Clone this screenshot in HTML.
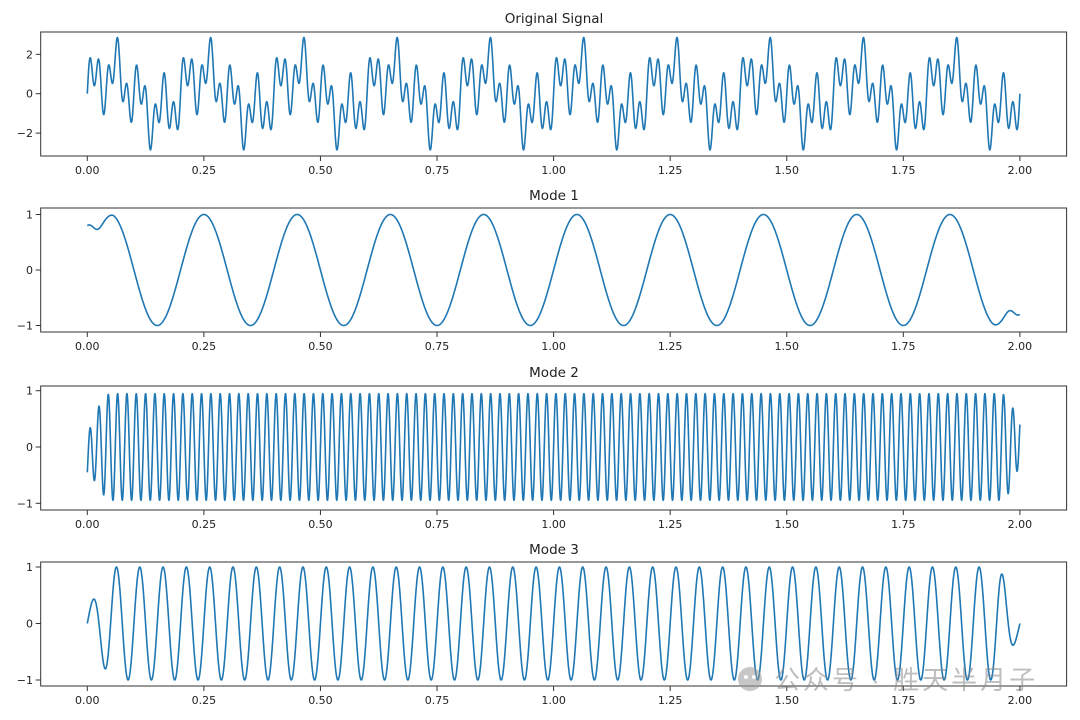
<!DOCTYPE html>
<html><head><meta charset="utf-8"><style>
html,body{margin:0;padding:0;background:#fff;width:1080px;height:720px;overflow:hidden}
svg text{font-family:"DejaVu Sans","Liberation Sans",sans-serif;fill:#222}
</style></head><body>
<svg id="s" width="1080" height="720" viewBox="0 0 1080 720" xmlns="http://www.w3.org/2000/svg">
<text x="554" y="23" font-size="13.5" text-anchor="middle">Original Signal</text>
<text x="554" y="200" font-size="13.5" text-anchor="middle">Mode 1</text>
<text x="554" y="377" font-size="13.5" text-anchor="middle">Mode 2</text>
<text x="554" y="554" font-size="13.5" text-anchor="middle">Mode 3</text>
<g id="g"></g>
<g opacity="0.55">
<circle cx="750" cy="679" r="12" fill="#9a9a9a"/>
<circle cx="746" cy="677" r="2" fill="#fff"/><circle cx="754" cy="677" r="2" fill="#fff"/>
<text x="774" y="689" font-size="26" letter-spacing="3" style="font-family:'Liberation Sans','Noto Sans CJK SC',sans-serif;fill:#8a8a8a">公众号 · 胜天半月子</text>
</g>
</svg>
<script>
var NS="http://www.w3.org/2000/svg",g=document.getElementById('g');
function X(t){return 87.3+t*466.3;}
function ss(a,b,x){var u=Math.min(1,Math.max(0,(x-a)/(b-a)));return u*u*(3-2*u);}
var P=Math.PI;
var panels=[
 {top:32,y0:93.7,sc:19.7,ticks:[-2,0,2],f:function(t){return Math.sin(10*P*t)+Math.sin(40*P*t)+Math.sin(100*P*t);}},
 {top:208,y0:270,sc:55.5,ticks:[-1,0,1],f:function(t){var w=ss(0,0.06,t),e=ss(1.94,2,t);return (1-e)*(w*Math.sin(10*P*t)+(1-w)*(0.8+0.03*Math.sin(60*P*t)))+e*(-0.8+0.03*Math.sin(60*P*t));}},
 {top:386,y0:447,sc:56.3,ticks:[-1,0,1],f:function(t){var w=ss(0,0.05,t),e=ss(1.96,2,t);var a=(0.5+0.45*w)*(1-0.4*e);return a*Math.sin(100*P*t)-0.45*(1-ss(0,0.01,t))*(1-w)+0.4*e*ss(1.99,2,t);}},
 {top:562,y0:623.5,sc:56.5,ticks:[-1,0,1],f:function(t){var w=ss(0,0.06,t),e=ss(1.95,2,t);var a=(0.35+0.65*w)*(1-0.3*e);return a*Math.sin(40*P*t)*(1-e*0.6);}}
];
function el(n,a){var e=document.createElementNS(NS,n);for(var k in a)e.setAttribute(k,a[k]);g.appendChild(e);return e;}
panels.forEach(function(p){
 var d="";for(var i=0;i<=3000;i++){var t=2*i/3000;var v=p.f(t);d+=(i?"L":"M")+X(t).toFixed(2)+" "+(p.y0-v*p.sc).toFixed(2);}
 el('path',{d:d,fill:'none',stroke:'#1f77b4','stroke-width':1.6,'stroke-linejoin':'round'});
 el('rect',{x:40.7,y:p.top,width:1025.9,height:124,fill:'none',stroke:'#333','stroke-width':1});
 for(var k=0;k<=8;k++){var t=k*0.25,x=X(t);el('line',{x1:x,x2:x,y1:p.top+124,y2:p.top+129,stroke:'#333'});
  var tx=el('text',{x:x,y:p.top+142,'font-size':11,'text-anchor':'middle'});tx.textContent=t.toFixed(2);}
 p.ticks.forEach(function(v){var y=p.y0-v*p.sc;el('line',{x1:35.7,x2:40.7,y1:y,y2:y,stroke:'#333'});
  var tx=el('text',{x:33,y:y+4,'font-size':11,'text-anchor':'end'});tx.textContent=v<0?"\u2212"+(-v):String(v);});
});
</script>
</body></html>
